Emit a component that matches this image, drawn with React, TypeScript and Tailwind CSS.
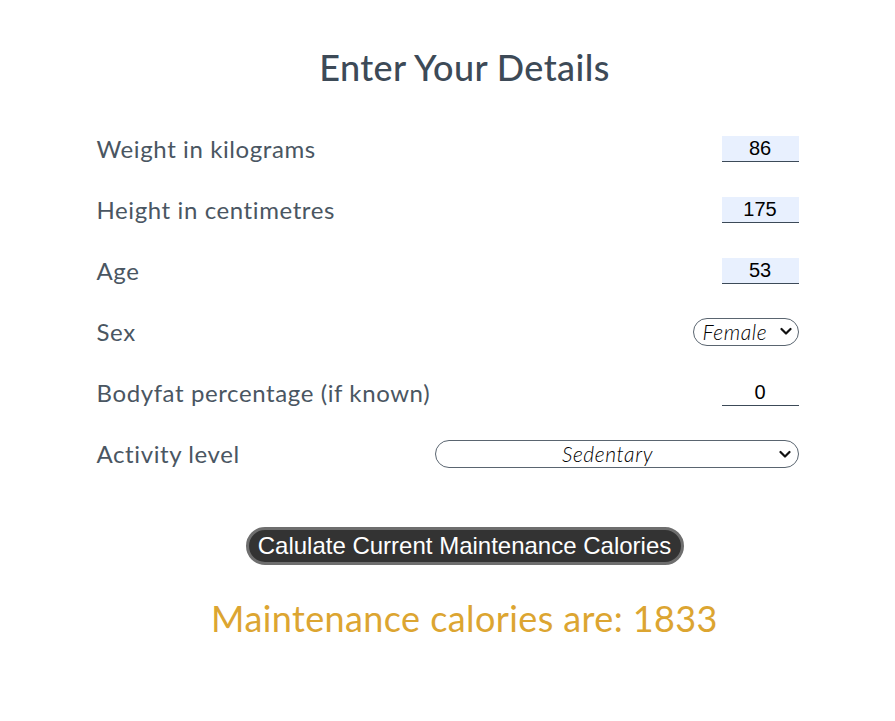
import React from "react";

type Field = {
  label: string;
  value: string;
  filled?: boolean;
};

const fields: Field[] = [
  { label: "Weight in kilograms", value: "86", filled: true },
  { label: "Height in centimetres", value: "175", filled: true },
  { label: "Age", value: "53", filled: true },
];

const Chevron = () => (
  <svg viewBox="0 0 12 8" className="h-[9px] w-[12px]" fill="none">
    <path d="M1.5 1.5 6 6l4.5-4.5" stroke="#111" strokeWidth="2.2" strokeLinecap="round" strokeLinejoin="round" />
  </svg>
);

const NumberBox = ({ value, filled }: { value: string; filled?: boolean }) => (
  <input
    readOnly
    value={value}
    className={`h-[26px] w-[77px] border-0 border-b border-[#3c4a58] text-center text-[20px] text-black outline-none font-['Liberation_Sans',Arial,sans-serif] ${
      filled ? "bg-[#e8f0fe]" : "bg-transparent"
    }`}
  />
);

export default function App() {
  return (
    <div className="min-h-screen bg-white font-['Lato','Open_Sans',sans-serif] text-[#4a5662]">
      <div className="mx-auto w-[702px] pt-[40px]">
        <h1 className="pl-[34px] text-center text-[36px] font-medium tracking-[0.4px] text-[#3d4a57]">
          Enter Your Details
        </h1>

        <div className="mt-[24px] flex flex-col">
          {fields.map((f) => (
            <div key={f.label} className="flex h-[61px] items-center justify-between">
              <span className="text-[24px] tracking-[0.6px]">{f.label}</span>
              <NumberBox value={f.value} filled={f.filled} />
            </div>
          ))}

          <div className="flex h-[61px] items-center justify-between">
            <span className="text-[24px] tracking-[0.6px]">Sex</span>
            <div className="flex h-[28px] w-[106px] items-center justify-between rounded-full border border-[#5a6570] pl-[9px] pr-[6px]">
              <span className="text-[21px] font-light italic tracking-[0.6px] text-black">Female</span>
              <Chevron />
            </div>
          </div>

          <div className="flex h-[61px] items-center justify-between">
            <span className="text-[24px] tracking-[0.6px]">Bodyfat percentage (if known)</span>
            <NumberBox value="0" />
          </div>

          <div className="flex h-[61px] items-center justify-between">
            <span className="text-[24px] tracking-[0.6px]">Activity level</span>
            <div className="relative flex h-[28px] w-[364px] items-center justify-center rounded-full border border-[#5a6570] pr-[18px]">
              <span className="text-[21px] font-light italic tracking-[0.6px] text-black">Sedentary</span>
              <span className="absolute right-[7px] top-[9px]">
                <Chevron />
              </span>
            </div>
          </div>
        </div>

        <div className="mt-[43px] flex justify-center pl-[34px]">
          <button className="h-[38px] w-[438px] rounded-full border-[3px] border-[#6e6e6e] bg-[#333333] text-[24px] leading-none text-white font-['Liberation_Sans',Arial,sans-serif]">
            Calulate Current Maintenance Calories
          </button>
        </div>

        <p className="mt-[26px] pl-[34px] text-center text-[36px] tracking-[0.4px] text-[#dca531]">
          Maintenance calories are: 1833
        </p>
      </div>
    </div>
  );
}
